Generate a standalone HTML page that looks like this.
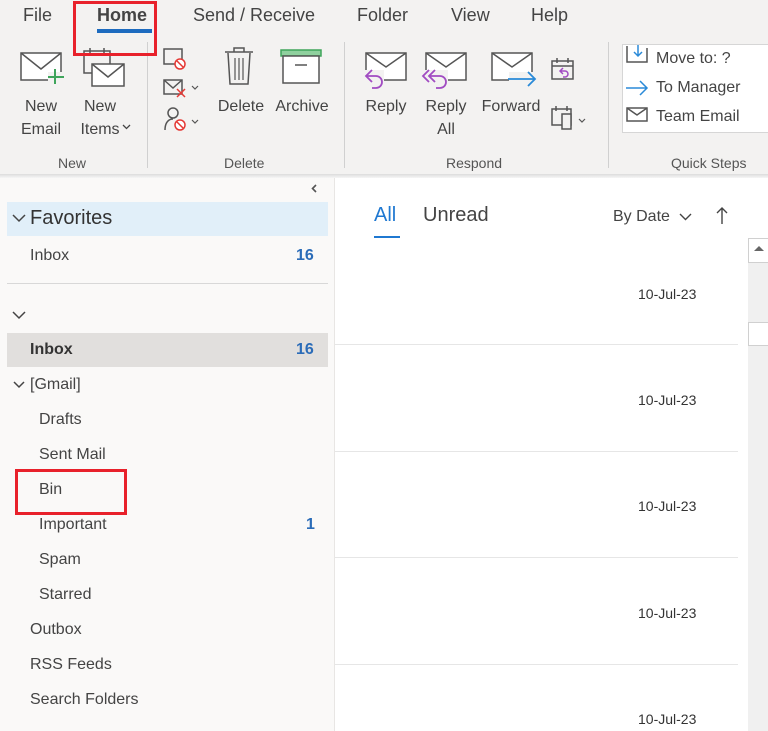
<!DOCTYPE html>
<html><head><meta charset="utf-8"><style>
*{margin:0;padding:0;box-sizing:border-box}
body{width:768px;height:731px;overflow:hidden;background:#fff;font-family:"Liberation Sans",sans-serif;color:#444;position:relative}
.a{position:absolute;white-space:nowrap}
.tab{font-size:18px;color:#444;top:5px}
.lbl{font-size:16px;color:#444;text-align:center;line-height:23px}
.grp{font-size:14px;color:#555;top:155px}
.sb{font-size:16px;color:#444}
.cnt{font-size:16px;color:#2b6cb8;font-weight:bold}
.date{font-size:14px;color:#333;left:638px}
.hl{position:absolute;left:335px;width:403px;height:1px;background:#e6e6e6}
svg{position:absolute;overflow:visible}
</style></head><body>
<div class="a" style="left:0;top:0;width:768px;height:174px;background:#f3f2f1"></div>
<div class="a" style="left:0;top:174px;width:768px;height:4px;background:linear-gradient(#dcdcdc,#f6f6f6)"></div>
<div class="a tab" style="left:23px">File</div>
<div class="a tab" style="left:97px;font-weight:bold">Home</div>
<div class="a" style="left:97px;top:29px;width:55px;height:4px;background:#1d6bbf"></div>
<div class="a tab" style="left:193px">Send / Receive</div>
<div class="a tab" style="left:357px">Folder</div>
<div class="a tab" style="left:451px">View</div>
<div class="a tab" style="left:531px">Help</div>
<div class="a" style="left:147px;top:42px;width:1px;height:126px;background:#d0d0d0"></div>
<div class="a" style="left:344px;top:42px;width:1px;height:126px;background:#d0d0d0"></div>
<div class="a" style="left:608px;top:42px;width:1px;height:126px;background:#d0d0d0"></div>

<svg style="left:20px;top:52px" width="45" height="30"><rect x="1" y="1" width="40" height="27" fill="#fff" stroke="#555" stroke-width="1.5"/><path d="M1 1 L21 17 L41 1" fill="none" stroke="#555" stroke-width="1.5"/><rect x="28" y="20" width="16" height="11" fill="#f3f2f1"/><path d="M35 17v15M28 25h16" stroke="#3fa55b" stroke-width="2"/></svg>
<svg style="left:83px;top:47px" width="45" height="40"><rect x="1" y="4" width="26" height="22" fill="none" stroke="#555" stroke-width="1.5"/><path d="M7 1v6M21 1v6" stroke="#555" stroke-width="1.5"/><rect x="9" y="17" width="32" height="22" fill="#fff" stroke="#555" stroke-width="1.5"/><path d="M9 17 L25 30 L41 17" fill="none" stroke="#555" stroke-width="1.5"/></svg>
<div class="a lbl" style="left:14px;top:95px;width:54px">New<br>Email</div>
<div class="a lbl" style="left:72px;top:95px;width:56px">New<br>Items</div>
<svg style="left:122px;top:124px" width="9" height="6"><path d="M1 1l3.5 3.5 3.5-3.5" fill="none" stroke="#444" stroke-width="1.3"/></svg>
<svg style="left:163px;top:45px" width="40" height="100"><rect x="1" y="4" width="18" height="15" fill="none" stroke="#555" stroke-width="1.5"/><circle cx="17" cy="19" r="5" fill="#fff" stroke="#e53935" stroke-width="1.5"/><path d="M14 16l6 6" stroke="#e53935" stroke-width="1.5"/>
<rect x="1" y="35" width="18" height="14" fill="none" stroke="#555" stroke-width="1.5"/><path d="M1 35l9 8 9-8" fill="none" stroke="#555" stroke-width="1.5"/><path d="M14 44l8 8M22 44l-8 8" stroke="#e53935" stroke-width="1.5"/><path d="M29 41l3 3 3-3" fill="none" stroke="#555" stroke-width="1.2"/>
<circle cx="10" cy="68" r="5" fill="none" stroke="#555" stroke-width="1.5"/><path d="M2 85c0-8 4-11 8-11" fill="none" stroke="#555" stroke-width="1.5"/><circle cx="17" cy="80" r="5" fill="#fff" stroke="#e53935" stroke-width="1.5"/><path d="M14 77l6 6" stroke="#e53935" stroke-width="1.5"/><path d="M29 75l3 3 3-3" fill="none" stroke="#555" stroke-width="1.2"/></svg>
<svg style="left:224px;top:47px" width="32" height="42"><path d="M1 5h28M10 5V1h10v4" fill="none" stroke="#555" stroke-width="1.5"/><path d="M4 6l2 31h18l2-31" fill="none" stroke="#555" stroke-width="1.5"/><path d="M11 11v22M15 11v22M19 11v22" stroke="#555" stroke-width="1.2"/></svg>
<div class="a lbl" style="left:215px;top:95px;width:52px">Delete</div>
<svg style="left:280px;top:49px" width="42" height="36"><rect x="1" y="1" width="40" height="6" fill="#8fd19e" stroke="#3fa55b" stroke-width="1.5"/><rect x="3" y="7" width="36" height="27" fill="#fff" stroke="#555" stroke-width="1.5"/><path d="M15 16h12" stroke="#555" stroke-width="1.5"/></svg>
<div class="a lbl" style="left:272px;top:95px;width:60px">Archive</div>
<div class="a grp" style="left:58px">New</div>
<div class="a grp" style="left:224px">Delete</div>

<svg style="left:362px;top:52px" width="46" height="40"><rect x="4" y="1" width="40" height="27" fill="#fff" stroke="#555" stroke-width="1.5"/><path d="M4 1 L24 15 L44 1" fill="none" stroke="#555" stroke-width="1.5"/><rect x="0" y="18" width="22" height="22" fill="#f3f2f1"/><path d="M10 18l-6 6 6 6M4 24h10a6 6 0 0 1 0 12h-4" fill="none" stroke="#a14cc2" stroke-width="1.8"/></svg>
<svg style="left:422px;top:52px" width="46" height="40"><rect x="4" y="1" width="40" height="27" fill="#fff" stroke="#555" stroke-width="1.5"/><path d="M4 1 L24 15 L44 1" fill="none" stroke="#555" stroke-width="1.5"/><rect x="0" y="18" width="26" height="22" fill="#f3f2f1"/><path d="M7 18l-6 6 6 6M13 18l-6 6 6 6M7 24h11a6 6 0 0 1 0 12h-4" fill="none" stroke="#a14cc2" stroke-width="1.8"/></svg>
<svg style="left:491px;top:52px" width="46" height="40"><rect x="1" y="1" width="40" height="27" fill="#fff" stroke="#555" stroke-width="1.5"/><path d="M1 1 L21 15 L41 1" fill="none" stroke="#555" stroke-width="1.5"/><rect x="18" y="20" width="26" height="14" fill="#f3f2f1"/><path d="M17 27h26M37 20l7 7-7 7" fill="none" stroke="#2a8ad8" stroke-width="1.8"/></svg>
<div class="a lbl" style="left:362px;top:95px;width:48px">Reply</div>
<div class="a lbl" style="left:420px;top:95px;width:52px">Reply<br>All</div>
<div class="a lbl" style="left:478px;top:95px;width:66px">Forward</div>
<svg style="left:551px;top:57px" width="40" height="75"><rect x="1" y="4" width="21" height="18" fill="none" stroke="#555" stroke-width="1.5"/><path d="M1 9h21M6 1v5M17 1v5" stroke="#555" stroke-width="1.5"/><path d="M12 11l-3 3 3 3M9 14h5a3 3 0 0 1 0 6h-2" fill="none" stroke="#a14cc2" stroke-width="1.5"/>
<rect x="1" y="52" width="19" height="16" fill="none" stroke="#555" stroke-width="1.5"/><path d="M5 49v5M16 49v5" stroke="#555" stroke-width="1.5"/><rect x="11" y="57" width="9" height="15" fill="#f3f2f1" stroke="#555" stroke-width="1.5"/><path d="M28 62l3 3 3-3" fill="none" stroke="#555" stroke-width="1.2"/></svg>
<div class="a grp" style="left:446px">Respond</div>

<div class="a" style="left:622px;top:44px;width:146px;height:89px;background:#fff;border:1px solid #d6d6d6;border-right:none"></div>
<svg style="left:626px;top:45px" width="26" height="80"><path d="M1 1v16h20V3" fill="none" stroke="#555" stroke-width="1.5"/><path d="M12 0v11M8 7l4 4 4-4" fill="none" stroke="#2a8ad8" stroke-width="1.5"/><path d="M0 43h21M14 36l7 7-7 7" fill="none" stroke="#2a8ad8" stroke-width="1.5"/><rect x="1" y="63" width="20" height="13" fill="none" stroke="#555" stroke-width="1.5"/><path d="M1 63l10 7 10-7" fill="none" stroke="#555" stroke-width="1.5"/></svg>
<div class="a" style="left:656px;top:50px;font-size:16px">Move to: ?</div>
<div class="a" style="left:656px;top:79px;font-size:16px">To Manager</div>
<div class="a" style="left:656px;top:108px;font-size:16px">Team Email</div>
<div class="a grp" style="left:671px">Quick Steps</div>

<div class="a" style="left:73px;top:1px;width:84px;height:55px;border:3px solid #e8212b"></div>

<div class="a" style="left:0;top:178px;width:335px;height:553px;background:#faf9f8;border-right:1px solid #e8e6e4"></div>
<svg style="left:311px;top:184px" width="6" height="9"><path d="M5 1L1.5 4.5 5 8" fill="none" stroke="#555" stroke-width="1.6"/></svg>
<div class="a" style="left:7px;top:202px;width:321px;height:34px;background:#e1eff9"></div>
<svg style="left:12px;top:214px" width="14" height="10"><path d="M1 1l6 6 6-6" fill="none" stroke="#444" stroke-width="1.5"/></svg>
<div class="a" style="left:30px;top:207px;font-size:20px;color:#333">Favorites</div>
<div class="a sb" style="left:30px;top:247px">Inbox</div>
<div class="a cnt" style="left:296px;top:247px">16</div>
<div class="a" style="left:7px;top:283px;width:321px;height:1px;background:#d8d8d8"></div>
<svg style="left:12px;top:311px" width="14" height="10"><path d="M1 1l6 6 6-6" fill="none" stroke="#444" stroke-width="1.5"/></svg>
<div class="a" style="left:7px;top:333px;width:321px;height:34px;background:#e1dfdd"></div>
<div class="a sb" style="left:30px;top:341px;font-weight:bold;color:#333">Inbox</div>
<div class="a cnt" style="left:296px;top:341px">16</div>
<svg style="left:13px;top:381px" width="12" height="9"><path d="M1 1l5 5 5-5" fill="none" stroke="#444" stroke-width="1.5"/></svg>
<div class="a sb" style="left:30px;top:376px">[Gmail]</div>
<div class="a sb" style="left:39px;top:411px">Drafts</div>
<div class="a sb" style="left:39px;top:446px">Sent Mail</div>
<div class="a sb" style="left:39px;top:481px">Bin</div>
<div class="a sb" style="left:39px;top:516px">Important</div>
<div class="a cnt" style="left:306px;top:516px">1</div>
<div class="a sb" style="left:39px;top:551px">Spam</div>
<div class="a sb" style="left:39px;top:586px">Starred</div>
<div class="a sb" style="left:30px;top:621px">Outbox</div>
<div class="a sb" style="left:30px;top:656px">RSS Feeds</div>
<div class="a sb" style="left:30px;top:691px">Search Folders</div>
<div class="a" style="left:15px;top:469px;width:112px;height:46px;border:3px solid #e8212b"></div>

<div class="a" style="left:374px;top:204px;font-size:20px;color:#1f78d1">All</div>
<div class="a" style="left:374px;top:236px;width:26px;height:2px;background:#1f78d1"></div>
<div class="a" style="left:423px;top:204px;font-size:20px;color:#444">Unread</div>
<div class="a" style="left:613px;top:208px;font-size:16px;color:#444">By Date</div>
<svg style="left:679px;top:213px" width="13" height="9"><path d="M1 1l5.5 5.5 5.5-5.5" fill="none" stroke="#444" stroke-width="1.4"/></svg>
<svg style="left:716px;top:207px" width="12" height="18"><path d="M6 1v16M1 6l5-5 5 5" fill="none" stroke="#444" stroke-width="1.4"/></svg>
<div class="date a" style="top:286px">10-Jul-23</div>
<div class="hl" style="top:344px"></div>
<div class="date a" style="top:392px">10-Jul-23</div>
<div class="hl" style="top:451px"></div>
<div class="date a" style="top:498px">10-Jul-23</div>
<div class="hl" style="top:557px"></div>
<div class="date a" style="top:605px">10-Jul-23</div>
<div class="hl" style="top:664px"></div>
<div class="date a" style="top:711px">10-Jul-23</div>
<div class="a" style="left:748px;top:238px;width:20px;height:493px;background:#f0f0f0"></div>
<div class="a" style="left:748px;top:238px;width:20px;height:25px;background:#fff;border:1px solid #d0d0d0;border-right:none"></div>
<div class="a" style="left:754px;top:246px;width:0;height:0;border-left:5px solid transparent;border-right:5px solid transparent;border-bottom:5px solid #666"></div>
<div class="a" style="left:748px;top:322px;width:20px;height:24px;background:#fff;border:1px solid #d0d0d0;border-right:none"></div>
</body></html>
